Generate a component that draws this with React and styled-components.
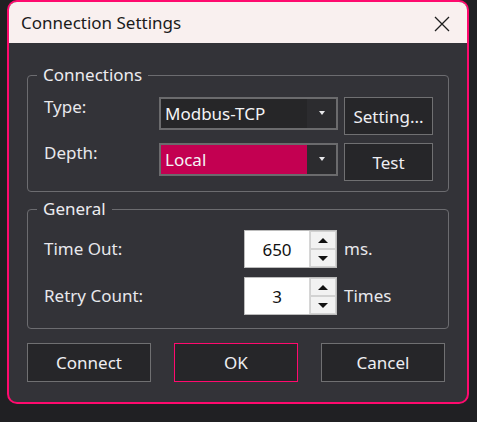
import React from 'react'
import styled, { createGlobalStyle } from 'styled-components'

const GlobalStyle = createGlobalStyle`
  html, body {
    margin: 0;
    background: #202023;
  }
  body {
    font-family: 'Noto Sans', 'Open Sans', sans-serif;
    -webkit-font-smoothing: antialiased;
  }
`

const Window = styled.div`
  margin-left: 7px;
  width: 458px;
  height: 400px;
  border: 2px solid #ff0a6e;
  border-radius: 10px;
  background: #333338;
  overflow: hidden;
  display: flex;
  flex-direction: column;
`

const TitleBar = styled.div`
  height: 41px;
  flex-shrink: 0;
  background: #f9f0ef;
  display: flex;
  align-items: center;
  justify-content: space-between;
  padding: 0 17px 0 12px;
  h1 {
    margin: 0;
    font-size: 17px;
    font-weight: 400;
    color: #1b1b1b;
  }
`

const CloseButton = styled.button`
  border: 0;
  padding: 0;
  background: none;
  width: 16px;
  height: 16px;
  display: flex;
  margin-top: 2px;
`

const Body = styled.div`
  padding: 22px 18px 0;
  display: flex;
  flex-direction: column;
`

const Group = styled.fieldset`
  margin: ${p => p.$top || 0}px 0 0;
  padding: ${p => p.$pad} 16px ${p => p.$bottom}px;
  border: 1px solid #6c6c70;
  border-radius: 4px;
  min-width: 0;
  legend {
    padding: 0 6px;
    margin-left: -7px;
    font-size: 17px;
    line-height: 20px;
    color: #ececf0;
  }
`

const ConnGrid = styled.div`
  display: grid;
  grid-template-columns: 109px 179px 89px;
  column-gap: 6px;
  row-gap: 8px;
  align-items: start;
`

const GenGrid = styled.div`
  display: grid;
  grid-template-columns: 193px 93px auto;
  column-gap: 7px;
  row-gap: 9px;
  align-items: center;
`

const Label = styled.span`
  font-size: 17px;
  line-height: 20px;
  color: #e8e8ec;
`

const Combo = styled.div`
  height: 33px;
  box-sizing: border-box;
  border: 2px solid #6b6b6d;
  display: flex;
`

const ComboText = styled.div`
  flex: 1;
  display: flex;
  align-items: center;
  padding-left: 4px;
  font-size: 17px;
  color: #f4f4f6;
  background: ${p => (p.$selected ? '#c30051' : '#262628')};
`

const ComboArrow = styled.div`
  width: 29px;
  background: #2c2c2f;
  display: flex;
  align-items: center;
  justify-content: center;
  &::after {
    content: '';
    border-left: 3.5px solid transparent;
    border-right: 3.5px solid transparent;
    border-top: 4px solid #e8e8ea;
    margin-top: -2px;
  }
`

const Button = styled.button`
  height: ${p => p.$h || 38}px;
  box-sizing: border-box;
  background: #262629;
  border: 1px solid ${p => (p.$accent ? '#ff0a6e' : '#707072')};
  color: #eeeef2;
  font-family: inherit;
  font-size: 17px;
  padding: 0;
`

const Spin = styled.div`
  height: 38px;
  box-sizing: border-box;
  border: 1px solid #bcbcbc;
  background: #ffffff;
  display: flex;
`

const SpinValue = styled.div`
  flex: 1;
  display: flex;
  align-items: center;
  justify-content: center;
  font-size: 17px;
  color: #111;
`

const SpinButtons = styled.div`
  width: 26px;
  display: flex;
  flex-direction: column;
  border-left: 1px solid #d6d6d6;
`

const SpinButton = styled.div`
  flex: 1;
  background: #f2f2f2;
  border: 1px solid #d2d2d2;
  display: flex;
  align-items: center;
  justify-content: center;
  &::after {
    content: '';
    border-left: 5px solid transparent;
    border-right: 5px solid transparent;
    ${p => (p.$down ? 'border-top' : 'border-bottom')}: 5px solid #111;
  }
`

const Footer = styled.div`
  display: flex;
  gap: 23px;
  margin-top: 14px;
  button {
    width: 124px;
  }
`

const SpinBox = ({ value }) => (
  <Spin>
    <SpinValue>{value}</SpinValue>
    <SpinButtons>
      <SpinButton />
      <SpinButton $down />
    </SpinButtons>
  </Spin>
)

const App = () => {
  return (
    <>
      <GlobalStyle />
      <Window>
        <TitleBar>
          <h1>Connection Settings</h1>
          <CloseButton aria-label='Close'>
            <svg width='16' height='16' viewBox='0 0 16 16'>
              <path d='M1 1 L15 15 M15 1 L1 15' stroke='#1e1e1e' strokeWidth='1.3' />
            </svg>
          </CloseButton>
        </TitleBar>
        <Body>
          <Group $pad='12px' $bottom={10}>
            <legend>Connections</legend>
            <ConnGrid>
              <Label>Type:</Label>
              <Combo>
                <ComboText>Modbus-TCP</ComboText>
                <ComboArrow />
              </Combo>
              <Button>Setting...</Button>
              <Label>Depth:</Label>
              <Combo>
                <ComboText $selected>Local</ComboText>
                <ComboArrow />
              </Combo>
              <Button>Test</Button>
            </ConnGrid>
          </Group>
          <Group $top={7} $pad='11px' $bottom={13}>
            <legend>General</legend>
            <GenGrid>
              <Label>Time Out:</Label>
              <SpinBox value='650' />
              <Label>ms.</Label>
              <Label>Retry Count:</Label>
              <SpinBox value='3' />
              <Label>Times</Label>
            </GenGrid>
          </Group>
          <Footer>
            <Button $h={39}>Connect</Button>
            <Button $h={39} $accent>OK</Button>
            <Button $h={39}>Cancel</Button>
          </Footer>
        </Body>
      </Window>
    </>
  )
}

export default App
